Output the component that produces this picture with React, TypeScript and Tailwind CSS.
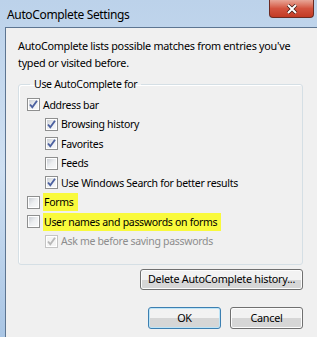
import React from 'react';

const font = { fontFamily: '"Noto Sans", "Open Sans", sans-serif' };

type CheckProps = { checked?: boolean; disabled?: boolean };

const CheckBox: React.FC<CheckProps> = ({ checked, disabled }) => (
  <span
    className={`relative inline-flex h-[13px] w-[13px] shrink-0 items-center justify-center border ${
      disabled ? 'border-[#c4c4c4]' : 'border-[#8e8f8f]'
    } bg-white`}
  >
    <span
      className={`absolute inset-[1px] bg-gradient-to-br ${
        disabled ? 'from-[#f4f4f4] to-[#f4f4f4]' : 'from-[#cbcfd5] via-[#edeff1] to-[#f7f8f9]'
      }`}
    />
    {checked && (
      <svg viewBox="0 0 11 11" className="relative h-[11px] w-[11px]">
        <path
          d="M2 5.5 L4.3 8.2 L9 1.8"
          fill="none"
          stroke={disabled ? '#b8b8b8' : '#4c61a0'}
          strokeWidth="1.9"
        />
      </svg>
    )}
  </span>
);

type RowProps = CheckProps & { label: string; indent?: boolean; highlight?: boolean };

const Row: React.FC<RowProps> = ({ label, indent, highlight, checked, disabled }) => (
  <div className={`flex h-[19.5px] items-center gap-[3px] ${indent ? 'pl-[18px]' : ''}`}>
    <CheckBox checked={checked} disabled={disabled} />
    <span
      className={`whitespace-nowrap leading-[16px] ${disabled ? 'text-[#8d8d8d]' : 'text-black'} ${
        highlight ? 'bg-[#f9fa3c] pl-[1px] pr-[4px] py-[1px]' : ''
      }`}
    >
      {label}
    </span>
  </div>
);

const WinButton: React.FC<{ label: string; primary?: boolean; className?: string }> = ({
  label,
  primary,
  className,
}) => (
  <button
    className={`flex items-center justify-center whitespace-nowrap rounded-[3px] border ${
      primary ? 'border-[#3c7fb1] shadow-[inset_0_0_0_1px_#bde4f7]' : 'border-[#707070] shadow-[inset_0_0_0_1px_#fcfcfc]'
    } bg-gradient-to-b from-[#f2f2f2] from-50% to-[#d6d6d6] to-50% text-[10.8px] tracking-[-0.25px] leading-none text-black ${className ?? ''}`}
  >
    {label}
  </button>
);

export default function App() {
  return (
    <div
      className="flex h-[337px] w-[317px] flex-col overflow-hidden bg-gradient-to-b from-[#bcd2ea] via-[#cfe0f2] to-[#a9c5e4]"
      style={font}
    >
      {/* title bar */}
      <div className="flex h-[27px] shrink-0 items-start justify-between">
        <span className="pl-[7px] pt-[6px] text-[12px] tracking-[-0.35px] leading-[17px] text-black">
          AutoComplete Settings
        </span>
        <div className="mr-[3px] flex h-[18px] w-[45px] items-center justify-center rounded-b-[4px] border border-t-0 border-[#6b2a22] bg-gradient-to-b from-[#e7a597] via-[#d3533f] to-[#c23a24]">
          <svg viewBox="0 0 12 10" className="h-[10px] w-[12px]">
            <path d="M2 1 L10 9 M10 1 L2 9" stroke="#3b1812" strokeWidth="3.4" />
            <path d="M2 1 L10 9 M10 1 L2 9" stroke="#ffffff" strokeWidth="2" />
          </svg>
        </div>
      </div>

      {/* client area */}
      <div className="ml-[5px] flex flex-1 flex-col border-l border-t border-[#5d7591] bg-[#f0f0f0] pl-[12px] pr-[14px] pt-[9px] text-[10.5px] tracking-[-0.3px] text-black">
        <p className="whitespace-nowrap text-[10.8px] tracking-[-0.27px] leading-[17px]">
          AutoComplete lists possible matches from entries you've
          <br />
          typed or visited before.
        </p>

        <fieldset className="mt-[5px] rounded-[3px] border border-[#d5dfe5] pl-[8px] pr-[8px] pb-[13px] shadow-[inset_1px_1px_0_#ffffff]">
          <legend className="ml-[3px] px-[4px] leading-[16px]">Use AutoComplete for</legend>
          <div className="mt-[3px] flex flex-col">
            <Row label="Address bar" checked />
            <Row label="Browsing history" checked indent />
            <Row label="Favorites" checked indent />
            <Row label="Feeds" indent />
            <Row label="Use Windows Search for better results" checked indent />
            <Row label="Forms" highlight />
            <Row label="User names and passwords on forms" highlight />
            <Row label="Ask me before saving passwords" checked disabled indent />
          </div>
        </fieldset>

        <div className="mt-[4px] flex justify-end">
          <WinButton label="Delete AutoComplete history..." className="h-[21px] w-[163px]" />
        </div>

        <div className="mt-[17px] flex justify-end gap-[9px]">
          <WinButton label="OK" primary className="h-[22px] w-[73px]" />
          <WinButton label="Cancel" className="h-[22px] w-[73px]" />
        </div>
      </div>
    </div>
  );
}
